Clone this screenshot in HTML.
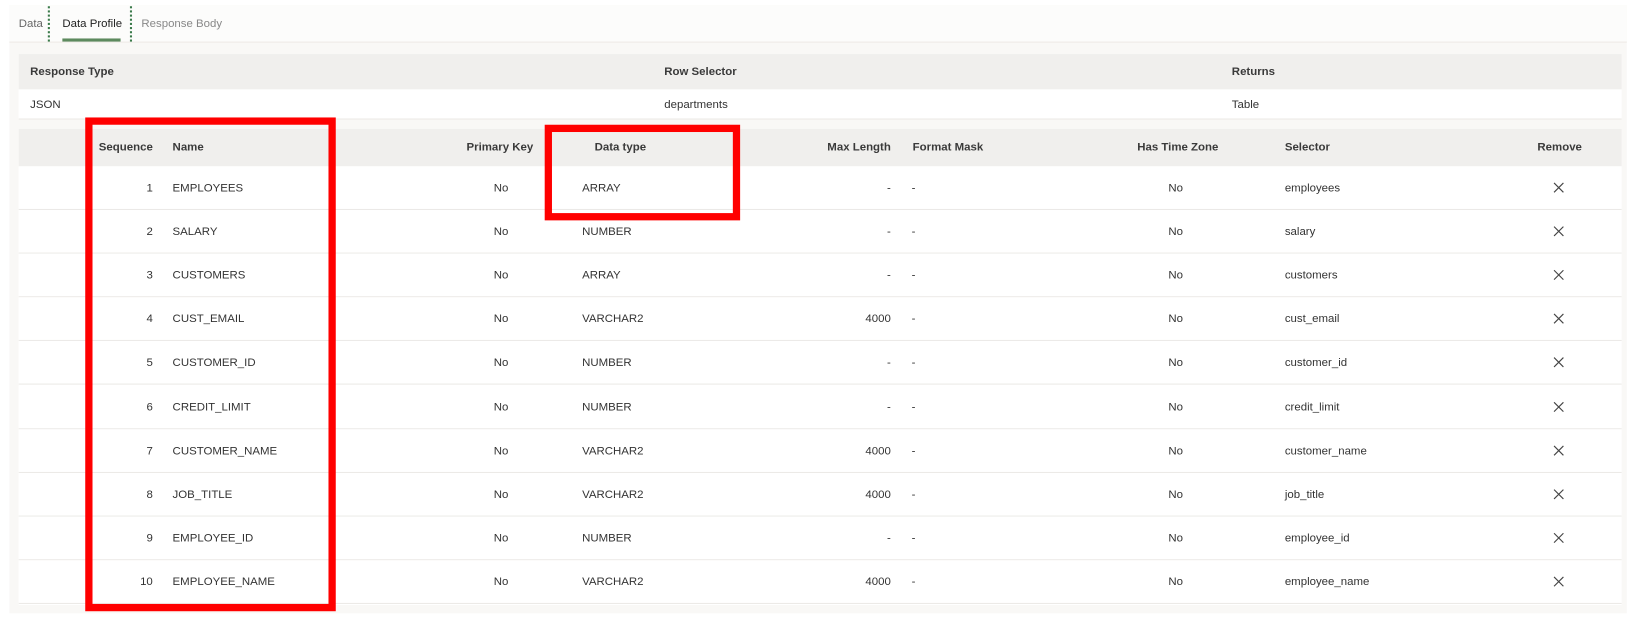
<!DOCTYPE html>
<html><head><style>
body{margin:0;width:1630px;height:618px;background:#fff;font-family:"Liberation Sans",sans-serif;font-size:11px;color:#333;position:relative;overflow:hidden}
#w{position:absolute;left:0;top:0;width:1568px;height:595px;transform:scale(1.0395);transform-origin:0 0}
.bg{position:absolute;left:9px;top:5px;width:1556px;height:585px;background:#f9f8f6}
.tabs{position:absolute;left:9px;top:5px;width:1556px;height:35px;background:#fcfcfb;border-bottom:1px solid #ece9e4}
.tab{position:absolute;top:12px;font-size:11px}
.dot{position:absolute;top:1px;height:34px;border-left:2px dotted #3a7a4a}
.t{position:absolute;left:18px;background:#fff}
.c{position:absolute;white-space:nowrap}
.row{position:absolute;left:0;width:1542px;border-bottom:1px solid #ebe9e6;background:#fff}
.row.hdr{background:#f0efed;font-weight:bold;color:#3a3a3a;border-bottom:none}
.red{position:absolute;border:7px solid #f00}
</style></head><body><div id="w">
<div class="bg"></div>
<div class="tabs">
<div class="tab" style="left:9px;color:#666">Data</div>
<div class="dot" style="left:37px"></div>
<div class="tab" style="left:51px;color:#222">Data Profile</div>
<div style="position:absolute;left:51px;top:32px;width:56px;height:3px;background:#5d8a5e"></div>
<div class="dot" style="left:116px"></div>
<div class="tab" style="left:127px;color:#888">Response Body</div>
</div>
<div class="t" style="top:52px;width:1542px;height:63px">
<div class="row hdr" style="top:0;height:34px">
<span class="c" style="left:11px;top:11px">Response Type</span>
<span class="c" style="left:621px;top:11px">Row Selector</span>
<span class="c" style="left:1167px;top:11px">Returns</span></div>
<div class="row" style="top:34px;height:28px">
<span class="c" style="left:11px;top:9px">JSON</span>
<span class="c" style="left:621px;top:9px">departments</span>
<span class="c" style="left:1167px;top:9px">Table</span></div>
</div>
<div class="t" id="t2" style="top:124px;width:1542px;height:458px">
<div class="row hdr" style="top:0;height:36px">
<span class="c" style="right:1413px;top:12px">Sequence</span>
<span class="c" style="left:148px;top:12px">Name</span>
<span class="c" style="right:1047px;top:12px">Primary Key</span>
<span class="c" style="left:554px;top:12px">Data type</span>
<span class="c" style="right:703px;top:12px">Max Length</span>
<span class="c" style="left:860px;top:12px">Format Mask</span>
<span class="c" style="left:1076px;top:12px">Has Time Zone</span>
<span class="c" style="left:1218px;top:12px">Selector</span>
<span class="c" style="left:1461px;top:12px">Remove</span></div>
</div>
<div class="red" style="left:82px;top:113px;width:227px;height:461px"></div>
<div class="red" style="left:524px;top:120px;width:174px;height:78px"></div>
</div>
<script>
var d=[["EMPLOYEES","ARRAY","-","employees"],["SALARY","NUMBER","-","salary"],["CUSTOMERS","ARRAY","-","customers"],["CUST_EMAIL","VARCHAR2","4000","cust_email"],["CUSTOMER_ID","NUMBER","-","customer_id"],["CREDIT_LIMIT","NUMBER","-","credit_limit"],["CUSTOMER_NAME","VARCHAR2","4000","customer_name"],["JOB_TITLE","VARCHAR2","4000","job_title"],["EMPLOYEE_ID","NUMBER","-","employee_id"],["EMPLOYEE_NAME","VARCHAR2","4000","employee_name"]];
var h="";d.forEach(function(r,i){var top=36+i*42.1;
h+='<div class="row" style="top:'+top+'px;height:41px">'+
'<span class="c" style="right:1413px;top:15px">'+(i+1)+'</span>'+
'<span class="c" style="left:148px;top:15px">'+r[0]+'</span>'+
'<span class="c" style="left:457px;top:15px">No</span>'+
'<span class="c" style="left:542px;top:15px">'+r[1]+'</span>'+
'<span class="c" style="right:703px;top:15px">'+r[2]+'</span>'+
'<span class="c" style="left:859px;top:15px">-</span>'+
'<span class="c" style="left:1106px;top:15px">No</span>'+
'<span class="c" style="left:1218px;top:15px">'+r[3]+'</span>'+
'<svg class="c" style="left:1476px;top:15px" width="11" height="11"><path d="M1 1L10 10M10 1L1 10" stroke="#444" stroke-width="1.1"/></svg></div>';});
document.getElementById("t2").insertAdjacentHTML("beforeend",h);
</script>
</body></html>
